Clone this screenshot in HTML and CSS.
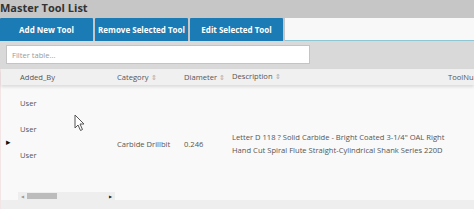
FILE: index.html
```html
<!DOCTYPE html>
<html lang="en">
<head>
  <meta charset="UTF-8">
  <title>Master Tool List</title>
  <link rel="stylesheet" href="styles.css">
</head>
<body>
  <h1 class="page-title">Master Tool List</h1>

  <div class="tabs">
    <button class="tab">Add New Tool</button>
    <button class="tab">Remove Selected Tool</button>
    <button class="tab">Edit Selected Tool</button>
    <div class="tab-rest"></div>
  </div>

  <div class="filter-bar">
    <input class="filter" type="text" placeholder="Filter table...">
  </div>

  <div class="grid">
    <div class="grid-head">
      <div class="col col-arrow"></div>
      <div class="col col-user">Added_By</div>
      <div class="col col-cat">Category <span class="sort">&#8661;</span></div>
      <div class="col col-dia">Diameter <span class="sort">&#8661;</span></div>
      <div class="col col-desc">Description <span class="sort">&#8661;</span></div>
      <div class="col col-num">ToolNu</div>
    </div>

    <div class="grid-body">
      <div class="row">
        <div class="col col-arrow"><span class="caret">&#9656;</span></div>
        <div class="col col-user users">
          <span>User</span>
          <span>User</span>
          <span>User</span>
        </div>
        <div class="col col-cat">Carbide Drillbit</div>
        <div class="col col-dia">0.246</div>
        <div class="col col-desc">Letter D 118 ? Solid Carbide - Bright Coated 3-1/4" OAL Right Hand Cut Spiral Flute Straight-Cylindrical Shank Series 220D</div>
        <div class="col col-num"></div>
      </div>

      <div class="hscroll">
        <span class="arr">&#9664;</span>
        <span class="thumb"></span>
        <span class="arr arr-right">&#9654;</span>
      </div>
    </div>
    <div class="grid-foot"></div>
  </div>

  <svg class="cursor" width="12" height="18" viewBox="0 0 12 18">
    <path d="M1 1 L1 14 L4 11 L6.5 16.5 L8.5 15.5 L6 10 L10 10 Z" fill="#fff" stroke="#555" stroke-width="1"/>
  </svg>
</body>
</html>
```

FILE: styles.css
```css
body {
  margin: 0;
  font-family: "Open Sans", Arial, sans-serif;
  font-size: 7.6px;
  color: #555;
  background-color: #c6c6c6;
  overflow: hidden;
}
.page-title {
  margin: 0;
  height: 18px;
  line-height: 16px;
  font-size: 11px;
  font-weight: bold;
  color: #333;
}
.tabs {
  display: flex;
  height: 23px;
  gap: 2px;
}
.tab {
  width: 93px;
  border: none;
  border-radius: 1px 1px 0 0;
  background-color: #1b7bb4;
  color: #fff;
  font-family: "Open Sans", Arial, sans-serif;
  font-size: 8px;
  font-weight: bold;
  padding: 0;
}
.tab-rest {
  flex: 1;
  background-color: #f8f8f8;
  border-bottom: 1px solid #8fc6d4;
}
.filter-bar {
  background-color: #d9d9d9;
  padding: 4px 6px 5px 6px;
}
.filter {
  display: block;
  box-sizing: border-box;
  width: 304px;
  height: 19px;
  border: 1px solid #c4c4c4;
  background-color: #fff;
  font-family: "Open Sans", Arial, sans-serif;
  font-size: 7.6px;
  padding: 0 5px;
}
.filter::placeholder {
  color: #999;
}
.grid {
  background-color: #f9f9f9;
  border-left: 1px solid #f3e4e6;
}
.grid-head {
  display: flex;
  height: 16px;
  align-items: center;
  background-color: #f0f0f0;
  box-shadow: 0 2px 3px rgba(0, 0, 0, 0.12);
  position: relative;
  white-space: nowrap;
}
.col {
  flex: none;
}
.col-arrow { width: 19px; }
.col-user { width: 97px; }
.col-cat { width: 67px; }
.col-dia { width: 48px; }
.col-desc { width: 216px; }
.col-num { width: 30px; }
.sort {
  color: #aaa;
  font-size: 7px;
}
.grid-body {
  height: 115px;
}
.row {
  display: flex;
  align-items: center;
  height: 93px;
  padding-top: 12px;
}
.users {
  display: flex;
  flex-direction: column;
  gap: 16px;
  align-self: flex-start;
  padding-top: 1px;
}
.caret {
  color: #111;
  font-size: 9px;
  padding-left: 5px;
  position: relative;
  top: -2px;
}
.col-desc {
  line-height: 12.5px;
  padding-right: 2px;
  box-sizing: border-box;
}
.hscroll {
  display: flex;
  align-items: center;
  margin-top: 2px;
  margin-left: 17px;
  width: 97px;
  height: 8px;
  background-color: #eeeeee;
}
.arr {
  font-size: 4px;
  color: #999;
  width: 9px;
  text-align: center;
}
.arr-right {
  color: #222;
  margin-left: auto;
}
.thumb {
  width: 30px;
  height: 6px;
  background-color: #bcbcbc;
}
.grid-foot {
  height: 10px;
  background-color: #eeeeee;
}
.cursor {
  position: absolute;
  left: 74px;
  top: 114px;
}
```
